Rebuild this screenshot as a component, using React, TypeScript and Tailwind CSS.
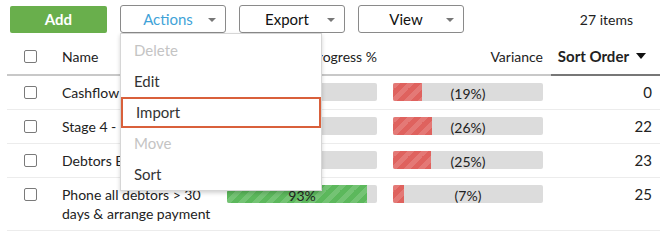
import React from "react";

type Row = {
  name: string[];
  progress: number;
  variance: number;
  sort: number;
};

const rows: Row[] = [
  { name: ["Cashflow Budget"], progress: 0, variance: 19, sort: 0 },
  { name: ["Stage 4 - Budget"], progress: 0, variance: 26, sort: 22 },
  { name: ["Debtors Blitz"], progress: 0, variance: 25, sort: 23 },
  { name: ["Phone all debtors > 30", "days & arrange payment"], progress: 93, variance: 7, sort: 25 },
];

function Caret() {
  return <span className="h-0 w-0 border-x-[4px] border-t-[4px] border-x-transparent border-t-[#777]" />;
}

function DropButton({ label, active }: { label: string; active?: boolean }) {
  return (
    <button className="relative flex h-[28px] w-[106px] items-center rounded-[3px] border border-[#8a8a8a] bg-white">
      <span className={`flex-1 pr-[10px] text-center text-[15px] ${active ? "text-[#3fa3d8]" : "text-[#111]"}`}>
        {label}
      </span>
      <span className="absolute right-[9px] top-[12px] flex">
        <Caret />
      </span>
    </button>
  );
}

function Checkbox() {
  return <span className="block h-[13px] w-[13px] rounded-[2px] border border-[#7a7a7a] bg-white" />;
}

function Bar({ value, color, label }: { value: number; color: string; label: string }) {
  return (
    <div className="relative h-[18px] w-[150px] overflow-hidden rounded-[2px] bg-[#dcdcdc]">
      <div
        className={`h-full ${color} bg-[linear-gradient(135deg,rgba(255,255,255,0.15)_25%,transparent_25%,transparent_50%,rgba(255,255,255,0.15)_50%,rgba(255,255,255,0.15)_75%,transparent_75%,transparent)] bg-[length:14px_14px]`}
        style={{ width: `${value}%` }}
      />
      <span className="absolute inset-0 flex items-center justify-center pt-[3px] text-[14px] leading-none text-[#222]">
        {label}
      </span>
    </div>
  );
}

const menu = [
  { label: "Delete", disabled: true },
  { label: "Edit" },
  { label: "Import", focused: true },
  { label: "Move", disabled: true },
  { label: "Sort" },
];

export default function App() {
  return (
    <div className="relative h-[231px] w-[660px] overflow-hidden bg-white font-['Segoe_UI','Lato',sans-serif] text-[14px] text-[#222]">
      <div className="flex h-[38px] items-start gap-[13px] pl-[10px] pt-[5px]">
        <button className="mt-[1px] h-[27px] w-[97px] rounded-[2px] bg-[#69af4c] text-[15px] font-bold text-white">
          Add
        </button>
        <DropButton label="Actions" active />
        <DropButton label="Export" />
        <DropButton label="View" />
        <span className="ml-auto pr-[27px] pt-[4px] text-[14px] text-[#222]">27 items</span>
      </div>

      <div className="ml-[7px] grid grid-cols-[47px_165px_166px_166px_109px]">
        <div className="flex h-[38px] items-center justify-center border-b-2 border-[#c8c8c8]">
          <Checkbox />
        </div>
        <div className="flex h-[38px] items-center border-b-2 border-[#c8c8c8] pl-[8px]">Name</div>
        <div className="flex h-[38px] items-center justify-end border-b-2 border-[#c8c8c8] pr-[8px]">Progress %</div>
        <div className="flex h-[38px] items-center justify-end border-b-2 border-[#c8c8c8] pr-[8px]">Variance</div>
        <div className="flex h-[38px] items-center justify-end gap-[7px] border-b-2 border-[#777] pr-[14px] text-[15px] font-bold">
          Sort Order
          <span className="h-0 w-0 border-x-[5px] border-t-[6px] border-x-transparent border-t-[#111]" />
        </div>

        {rows.map((r) => (
          <React.Fragment key={r.sort}>
            <div className="flex justify-center border-b border-[#ececec] pt-[10px]">
              <Checkbox />
            </div>
            <div className="border-b border-[#ececec] py-[7px] pl-[8px] leading-[19px]">
              {r.name.map((n) => (
                <div key={n} className="whitespace-nowrap">{n}</div>
              ))}
            </div>
            <div className="border-b border-[#ececec] py-[7px] pl-[8px]">
              <Bar value={r.progress} color="bg-[#5cb85c]" label={`${r.progress}%`} />
            </div>
            <div className="border-b border-[#ececec] py-[7px] pl-[8px]">
              <Bar value={r.variance} color="bg-[#df625e]" label={`(${r.variance}%)`} />
            </div>
            <div className="border-b border-[#ececec] py-[7px] pr-[8px] text-right text-[15px] leading-[19px]">{r.sort}</div>
          </React.Fragment>
        ))}
      </div>

      <div className="absolute left-[120px] top-[33px] w-[202px] border border-[#d6d6d6] bg-white pt-[1px] text-[15px] shadow-[0_2px_4px_rgba(0,0,0,0.18)]">
        {menu.map((m) => (
          <div
            key={m.label}
            className={`flex h-[31px] items-center pl-[13px] ${m.disabled ? "text-[#c4c4c4]" : "text-[#333]"} ${
              m.focused ? "border-2 border-[#d9603b] pl-[12px]" : ""
            }`}
          >
            {m.label}
          </div>
        ))}
      </div>
    </div>
  );
}
